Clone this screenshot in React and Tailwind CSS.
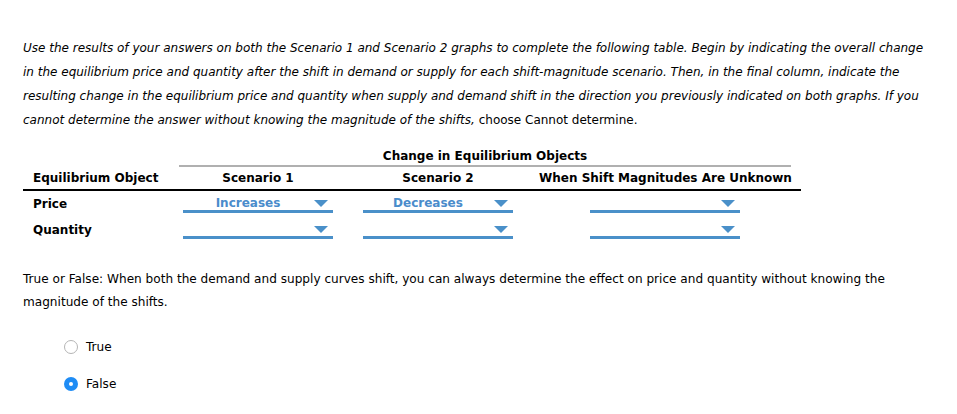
import React from "react";

function Caret() {
  return (
    <svg width="14" height="8" viewBox="0 0 14 8" className="block">
      <polygon points="0,0 14,0 7,7" fill="#4a90c9" />
    </svg>
  );
}

function Drop({ value, w }) {
  return (
    <div className="relative h-[22px] border-b-[3px] border-[#4a90c9]" style={{ width: w }}>
      <div className="absolute left-0 right-[20px] top-[5px] text-center text-[12px] font-bold text-[#4a8ccb] leading-[14px]">{value}</div>
      <div className="absolute right-[5px] top-[9px]"><Caret /></div>
    </div>
  );
}

export default function App() {
  const f = { fontFamily: '"DejaVu Sans", Verdana, sans-serif' };
  return (
    <div className="w-[957px] h-[414px] bg-white text-black overflow-hidden" style={f}>
      <div className="pt-[36px] pl-[23px] pr-[20px]">
        <p className="text-[12px] leading-[24px] italic whitespace-nowrap">
          Use the results of your answers on both the Scenario 1 and Scenario 2 graphs to complete the following table. Begin by indicating the overall change<br />
          in the equilibrium price and quantity after the shift in demand or supply for each shift-magnitude scenario. Then, in the final column, indicate the<br />
          resulting change in the equilibrium price and quantity when supply and demand shift in the direction you previously indicated on both graphs. If you<br />
          cannot determine the answer without knowing the magnitude of the shifts, <span className="not-italic">choose Cannot determine.</span>
        </p>
        <div className="mt-[13px] w-[778px] text-[12px] font-bold">
          <div className="flex h-[22px]">
            <div className="w-[156px]"></div>
            <div className="w-[612px] flex items-center justify-center border-b-2 border-[#b0b0b0] leading-[16px]">
              <span className="mt-[1px]">Change in Equilibrium Objects</span>
            </div>
          </div>
          <div className="flex h-[24px] items-center border-b-2 border-black whitespace-nowrap">
            <div className="w-[156px] pl-[10px]">Equilibrium Object</div>
            <div className="w-[158px] text-center">Scenario 1</div>
            <div className="w-[202px] text-center">Scenario 2</div>
            <div className="w-[252px] text-center">When Shift Magnitudes Are Unknown</div>
          </div>
          <div className="flex h-[26px] items-start">
            <div className="w-[156px] pl-[10px] pt-[4px]">Price</div>
            <div className="w-[158px] flex justify-center"><Drop value="Increases" w={150} /></div>
            <div className="w-[202px] flex justify-center"><Drop value="Decreases" w={150} /></div>
            <div className="w-[252px] flex justify-center"><Drop value="" w={150} /></div>
          </div>
          <div className="flex h-[26px] items-start">
            <div className="w-[156px] pl-[10px] pt-[4px]">Quantity</div>
            <div className="w-[158px] flex justify-center"><Drop value="" w={150} /></div>
            <div className="w-[202px] flex justify-center"><Drop value="" w={150} /></div>
            <div className="w-[252px] flex justify-center"><Drop value="" w={150} /></div>
          </div>
        </div>
        <p className="mt-[25px] text-[12.1px] leading-[23px] whitespace-nowrap">
          True or False: When both the demand and supply curves shift, you can always determine the effect on price and quantity without knowing the<br />
          magnitude of the shifts.
        </p>
        <div className="mt-[21px] pl-[41px] text-[12.1px]">
          <label className="flex items-center h-[24px] gap-[8px]">
            <span className="w-[14px] h-[14px] rounded-full border border-[#b5b5b5] bg-white"></span>
            <span>True</span>
          </label>
          <label className="flex items-center h-[24px] gap-[8px] mt-[13px]">
            <span className="w-[14px] h-[14px] rounded-full bg-[#1e8cf5] flex items-center justify-center">
              <span className="w-[4px] h-[4px] rounded-full bg-white"></span>
            </span>
            <span>False</span>
          </label>
        </div>
      </div>
    </div>
  );
}
